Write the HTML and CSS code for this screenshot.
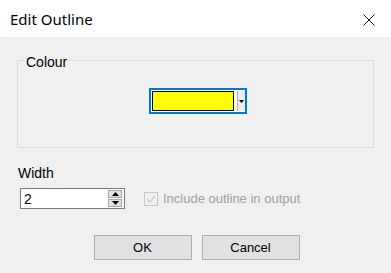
FILE: index.html
```html
<!DOCTYPE html>
<html lang="en">
<head>
    <meta charset="UTF-8">
    <title>Edit Outline</title>
    <link rel="stylesheet" href="styles.css">
</head>
<body>
    <div class="window">
        <div class="titlebar">
            <span class="title">Edit Outline</span>
            <svg class="close" width="12" height="12" viewBox="0 0 12 12">
                <path d="M0.5 0.5 L11.5 11.5 M11.5 0.5 L0.5 11.5" stroke="#111" stroke-width="1" fill="none"/>
            </svg>
        </div>

        <div class="content">
            <fieldset class="group">
                <legend>Colour</legend>
                <div class="group-body">
                    <div class="combo">
                        <div class="swatch"></div>
                        <div class="drop">
                            <svg width="5" height="3" viewBox="0 0 5 3"><path d="M0 0 H5 L2.5 3 Z" fill="#000"/></svg>
                        </div>
                    </div>
                </div>
            </fieldset>

            <div class="label">Width</div>
            <div class="row">
                <div class="spin">
                    <span class="spin-value">2</span>
                    <div class="spin-btns">
                        <div class="spin-btn"><svg width="7" height="4" viewBox="0 0 7 4"><path d="M0 4 H7 L3.5 0 Z" fill="#000"/></svg></div>
                        <div class="spin-btn"><svg width="7" height="4" viewBox="0 0 7 4"><path d="M0 0 H7 L3.5 4 Z" fill="#000"/></svg></div>
                    </div>
                </div>
                <div class="check">
                    <div class="check-box">
                        <svg width="12" height="12" viewBox="0 0 12 12"><path d="M2 6.5 L4.8 9.2 L10 3" stroke="#c8c8c8" stroke-width="1.2" fill="none"/></svg>
                    </div>
                    <span class="check-label">Include outline in output</span>
                </div>
            </div>

            <div class="buttons">
                <button class="btn">OK</button>
                <button class="btn">Cancel</button>
            </div>
        </div>
    </div>
</body>
</html>
```

FILE: styles.css
```css
html, body {
    margin: 0;
    padding: 0;
}
body {
    width: 391px;
    height: 273px;
    overflow: hidden;
    background-color: #f0f0f0;
    font-family: "Liberation Sans", Arial, sans-serif;
    color: #000;
}
.window {
    display: flex;
    flex-direction: column;
    height: 273px;
}
.titlebar {
    height: 37px;
    background-color: #fff;
    display: flex;
    align-items: center;
    justify-content: space-between;
    padding: 0 16px 0 10px;
    box-sizing: border-box;
}
.title {
    font-family: "Noto Sans", "Open Sans", sans-serif;
    font-size: 15px;
    color: #000;
    margin-top: 1px;
}
.close {
    display: block;
    margin-top: 2px;
}
.content {
    padding: 13px 17px 0 17px;
    display: flex;
    flex-direction: column;
}
.group {
    margin: 0;
    border: 1px solid #dcdcdc;
    padding: 0;
    min-width: 0;
}
.group legend {
    font-size: 14px;
    line-height: 16px;
    padding: 4px 2px 0 2px;
    margin-left: 6px;
}
.group-body {
    padding: 18px 0 33px 131px;
}
.combo {
    width: 98px;
    height: 26px;
    box-sizing: border-box;
    border: 2px solid #0078d7;
    background-color: #fff;
    display: flex;
    padding: 1px 0 1px 1px;
}
.swatch {
    width: 82px;
    height: 20px;
    box-sizing: border-box;
    border: 1px solid #000;
    background-color: #ffff00;
}
.drop {
    margin-left: 3px;
    flex: 1;
    border-left: 1px solid #b4b4b4;
    background-color: #ececec;
    display: flex;
    align-items: center;
    justify-content: center;
}
.drop svg {
    display: block;
    margin-top: 1px;
}
.label {
    font-size: 14px;
    line-height: 16px;
    margin-top: 17px;
    margin-left: 1px;
}
.row {
    display: flex;
    align-items: center;
    margin-top: 7px;
    margin-left: 3px;
}
.spin {
    width: 105px;
    height: 21px;
    box-sizing: border-box;
    border: 1px solid #7a7a7a;
    background-color: #fff;
    display: flex;
    align-items: center;
    justify-content: space-between;
    padding: 1px;
}
.spin-value {
    font-size: 14px;
    margin-left: 2px;
}
.spin-btns {
    width: 14px;
    height: 17px;
    display: flex;
    flex-direction: column;
    gap: 1px;
    margin-right: 1px;
}
.spin-btn {
    flex: 1;
    background-color: #e1e1e1;
    border: 1px solid #a8a8a8;
    display: flex;
    align-items: center;
    justify-content: center;
}
.spin-btn svg {
    display: block;
}
.check {
    display: flex;
    align-items: center;
    margin-left: 19px;
}
.check-box {
    width: 14px;
    height: 14px;
    box-sizing: border-box;
    border: 1px solid #c8c8c8;
    background-color: #f0f0f0;
    display: flex;
    align-items: center;
    justify-content: center;
}
.check-box svg {
    display: block;
}
.check-label {
    font-size: 13px;
    color: #a0a0a0;
    margin-left: 5px;
}
.buttons {
    display: flex;
    justify-content: center;
    gap: 10px;
    margin-top: 26px;
    margin-left: 2px;
}
.btn {
    width: 98px;
    height: 25px;
    box-sizing: border-box;
    background-color: #e1e1e1;
    border: 1px solid #adadad;
    border-radius: 0;
    font-family: "Liberation Sans", Arial, sans-serif;
    font-size: 13px;
    color: #000;
    padding: 0;
}
```
